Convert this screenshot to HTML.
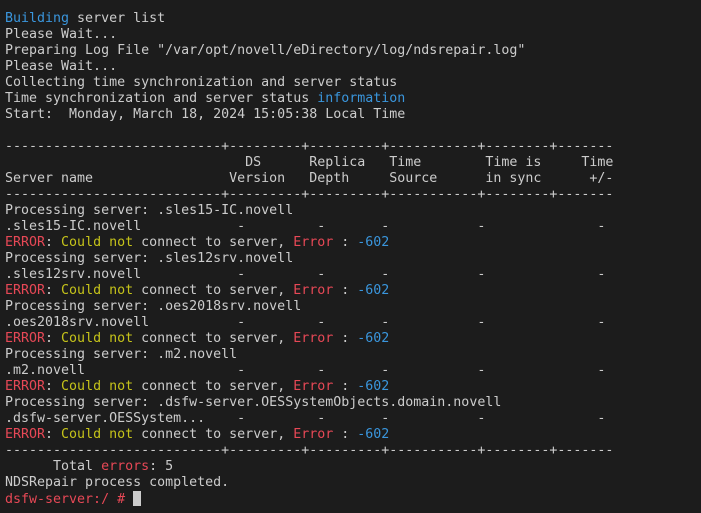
<!DOCTYPE html>
<html><head><meta charset="utf-8"><style>
html,body{margin:0;padding:0;background:#1c1c1c;width:701px;height:513px;overflow:hidden}
pre{position:absolute;left:5px;top:11px;margin:0;font-family:"DejaVu Sans Mono","Liberation Mono",monospace;font-size:13.3px;line-height:16px;color:#cccccc;letter-spacing:0}
.b{color:#3a96dd}.r{color:#e74856}.y{color:#c5c31a}
.cur{display:inline-block;width:8px;height:15px;background:#cccccc;vertical-align:-3px}
</style></head><body><pre><span class="b">Building</span> server list
Please Wait...
Preparing Log File "/var/opt/novell/eDirectory/log/ndsrepair.log"
Please Wait...
Collecting time synchronization and server status
Time synchronization and server status <span class="b">information</span>
Start:  Monday, March 18, 2024 15:05:38 Local Time

---------------------------+---------+---------+-----------+--------+-------
                              DS      Replica   Time        Time is     Time
Server name                 Version   Depth     Source      in sync      +/-
---------------------------+---------+---------+-----------+--------+-------
Processing server: .sles15-IC.novell
.sles15-IC.novell            -         -       -           -              -
<span class="r">ERROR</span>: <span class="y">Could not</span> connect to server, <span class="r">Error</span> : <span class="b">-602</span>
Processing server: .sles12srv.novell
.sles12srv.novell            -         -       -           -              -
<span class="r">ERROR</span>: <span class="y">Could not</span> connect to server, <span class="r">Error</span> : <span class="b">-602</span>
Processing server: .oes2018srv.novell
.oes2018srv.novell           -         -       -           -              -
<span class="r">ERROR</span>: <span class="y">Could not</span> connect to server, <span class="r">Error</span> : <span class="b">-602</span>
Processing server: .m2.novell
.m2.novell                   -         -       -           -              -
<span class="r">ERROR</span>: <span class="y">Could not</span> connect to server, <span class="r">Error</span> : <span class="b">-602</span>
Processing server: .dsfw-server.OESSystemObjects.domain.novell
.dsfw-server.OESSystem...    -         -       -           -              -
<span class="r">ERROR</span>: <span class="y">Could not</span> connect to server, <span class="r">Error</span> : <span class="b">-602</span>
---------------------------+---------+---------+-----------+--------+-------
      Total <span class="r">errors</span>: 5
NDSRepair process completed.
<span class="r">dsfw-server:/ #</span> <span class="cur"></span></pre></body></html>
